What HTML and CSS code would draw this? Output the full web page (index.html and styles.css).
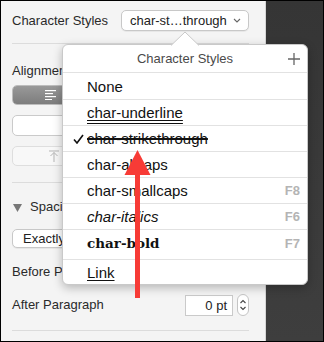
FILE: index.html
```html
<!DOCTYPE html>
<html lang="en">
<head>
    <meta charset="UTF-8">
    <title>Character Styles</title>
    <link rel="stylesheet" href="styles.css">
</head>
<body>

    <div class="frame">
        <div class="panel">
            <div class="row first">
                <span class="label">Character Styles</span>
                <div class="popup">
                    <span>char-st…through</span>
                    <svg class="chev" width="8" height="5" viewBox="0 0 8 5"><path d="M1 1 L4 4 L7 1" fill="none" stroke="#666" stroke-width="1.1"/></svg>
                </div>
            </div>
            <div class="rule r1"></div>
            <div class="label heading">Alignment</div>
            <div class="segmented">
                <div class="seg on">
                    <svg width="11" height="10" viewBox="0 0 11 10">
                        <rect x="0" y="0" width="11" height="1.2" fill="#fff"/>
                        <rect x="0" y="3" width="8" height="1.2" fill="#fff"/>
                        <rect x="0" y="6" width="11" height="1.2" fill="#fff"/>
                        <rect x="0" y="9" width="7" height="1.2" fill="#fff"/>
                    </svg>
                </div>
            </div>
            <div class="field wide"></div>
            <div class="btn disabled">
                <svg width="12" height="12" viewBox="0 0 12 12"><path d="M1 1 H11 M6 2.5 V12 M2.5 6 L6 2.5 L9.5 6" fill="none" stroke="#b5b5b5" stroke-width="1"/></svg>
            </div>
            <div class="rule r2"></div>
            <div class="label heading spacing">
                <svg class="tri" width="9" height="8" viewBox="0 0 9 8"><polygon points="0,0 9,0 4.5,8" fill="#777"/></svg>
                Spacing
            </div>
            <div class="popup exactly"><span>Exactly</span></div>
            <div class="label heading before">Before Paragraph</div>
            <div class="row after">
                <span class="label">After Paragraph</span>
                <div class="num">
                    <div class="field small">0 pt</div>
                    <div class="stepper">
                        <svg width="8" height="14" viewBox="0 0 8 14"><path d="M1.5 5 L4 2.5 L6.5 5 M1.5 9 L4 11.5 L6.5 9" fill="none" stroke="#444" stroke-width="1.1"/></svg>
                    </div>
                </div>
            </div>
            <div class="rule r3"></div>
        </div>
        <div class="dark"></div>

        <div class="menu">
            <div class="menu-head">
                <span>Character Styles</span>
                <svg class="plus" width="12" height="12" viewBox="0 0 12 12"><path d="M6 0 V12 M0 6 H12" stroke="#666" stroke-width="1.3"/></svg>
            </div>
            <ul>
                <li class="tall">None</li>
                <li><span class="underline">char-underline</span></li>
                <li>
                    <svg class="check" width="11" height="10" viewBox="0 0 11 10"><path d="M1 5.5 L4 9 L10 1" fill="none" stroke="#111" stroke-width="1.6"/></svg>
                    <span class="strike">char-strikethrough</span>
                </li>
                <li>char-allcaps</li>
                <li>char-smallcaps<span class="key">F8</span></li>
                <li><em>char-italics</em><span class="key">F6</span></li>
                <li class="bold-row"><span class="serif">char-bold</span><span class="key">F7</span></li>
                <li class="last"><span class="link">Link</span></li>
            </ul>
        </div>
        <svg class="pointer" width="28" height="15" viewBox="0 0 28 15"><path d="M0 14.5 L14 1 L28 14.5" fill="#fff" stroke="#c9c9c9" stroke-width="1"/></svg>

        <svg class="red-arrow" width="36" height="152" viewBox="0 0 36 152">
            <polygon points="17.5,2 4.5,27 30.5,27" fill="#f73b36"/>
            <rect x="15" y="26" width="5" height="124" fill="#f73b36"/>
        </svg>
    </div>

</body>
</html>
```

FILE: styles.css
```css
body {
    margin: 0;
    padding: 0;
    background: #fff;
    font-family: "Liberation Sans", Arial, sans-serif;
}

.frame {
    position: relative;
    width: 324px;
    height: 342px;
    box-sizing: border-box;
    border: 1px solid #000;
    display: flex;
    overflow: hidden;
}

.panel {
    width: 265px;
    background: #f4f4f4;
    padding: 0 16px 0 11px;
    box-sizing: border-box;
    border-right: 1px solid #d6d6d6;
}

.dark {
    flex: 1;
    background: linear-gradient(#353535, #3e3e3e);
}

.label {
    font-size: 13px;
    color: #2a2a2a;
    line-height: 16px;
}

.row {
    display: flex;
    align-items: center;
    justify-content: space-between;
}

.row.first {
    margin-top: 9px;
    height: 21px;
}

.popup {
    height: 21px;
    box-sizing: border-box;
    border: 1px solid #c8c8c8;
    border-radius: 5px;
    background: #fff;
    box-shadow: 0 1px 0 rgba(0, 0, 0, 0.05);
    display: flex;
    align-items: center;
    font-size: 13px;
    color: #222;
}

.row.first .popup {
    width: 128px;
    padding: 0 7px 0 8px;
    justify-content: space-between;
}

.rule {
    height: 1px;
    background: #dcdcdc;
}

.r1 { margin-top: 12px; }
.r2 { margin-top: 16px; }
.r3 { margin-top: 14px; }

.heading {
    height: 16px;
}

.rule + .heading { margin-top: 19px; }

.segmented {
    margin-top: 6px;
    height: 20px;
    display: flex;
    border: 1px solid #bdbdbd;
    border-radius: 5px;
    background: #fff;
    box-sizing: border-box;
    overflow: hidden;
}

.seg {
    width: 75px;
    display: flex;
    align-items: center;
    justify-content: center;
}

.seg.on {
    background: linear-gradient(#999, #7d7d7d);
}

.field {
    background: #fff;
    box-sizing: border-box;
    border: 1px solid #cacaca;
}

.field.wide {
    margin-top: 10px;
    height: 21px;
    border-radius: 5px;
}

.btn {
    margin-top: 10px;
    height: 20px;
    box-sizing: border-box;
    border: 1px solid #dedede;
    border-radius: 5px;
    background: #f8f8f8;
    display: flex;
    align-items: center;
    padding-left: 35px;
}

.spacing {
    display: flex;
    align-items: center;
}

.rule + .spacing { margin-top: 16px; }

.tri {
    margin: 1px 8px 0 1px;
}

.exactly {
    margin-top: 14px;
    height: 19px;
    padding-left: 10px;
}

.before {
    margin-top: 16px;
}

.row.after {
    margin-top: 14px;
    height: 22px;
}

.num {
    display: flex;
    align-items: center;
    gap: 4px;
}

.field.small {
    width: 48px;
    height: 21px;
    font-size: 13px;
    text-align: right;
    padding: 2px 5px 0 0;
    color: #222;
}

.stepper {
    width: 12px;
    height: 22px;
    box-sizing: border-box;
    border: 1px solid #c5c5c5;
    border-radius: 6px;
    background: #fff;
    display: flex;
    align-items: center;
    justify-content: center;
}

/* popover menu */
.menu {
    position: absolute;
    left: 61px;
    top: 43px;
    width: 246px;
    height: 241px;
    box-sizing: border-box;
    background: #fff;
    border: 1px solid #c9c9c9;
    border-radius: 6px;
    box-shadow: 0 3px 10px rgba(0, 0, 0, 0.25);
}

.menu-head {
    position: relative;
    height: 28px;
    box-sizing: border-box;
    border-bottom: 1px solid #e2e2e2;
    text-align: center;
    font-size: 13px;
    color: #4a4a4a;
    line-height: 27px;
}

.plus {
    position: absolute;
    right: 7px;
    top: 8px;
}

.menu ul {
    list-style: none;
    margin: 0;
    padding: 0;
}

.menu li {
    position: relative;
    height: 26px;
    box-sizing: border-box;
    border-bottom: 1px solid #e2e2e2;
    padding: 0 7px 0 24px;
    display: flex;
    align-items: center;
    justify-content: space-between;
    font-size: 15px;
    color: #111;
}

.menu li.tall { height: 27px; }
.menu li.bold-row { height: 30px; padding-bottom: 3px; }
.menu li.last { border-bottom: none; height: 25px; }

.underline {
    text-decoration: underline double;
    text-underline-offset: 2px;
}

.strike {
    text-decoration: line-through;
    text-decoration-thickness: 1.5px;
}

.check {
    position: absolute;
    left: 10px;
    top: 8px;
}

.serif {
    font-family: "DejaVu Serif", serif;
    font-weight: bold;
    font-size: 13.5px;
}

.link {
    text-decoration: underline;
    text-underline-offset: 2px;
}

.key {
    font-size: 13px;
    font-weight: bold;
    color: #b4b4b4;
}

.pointer {
    position: absolute;
    left: 170px;
    top: 30px;
}

.red-arrow {
    position: absolute;
    left: 119px;
    top: 147px;
}
```
